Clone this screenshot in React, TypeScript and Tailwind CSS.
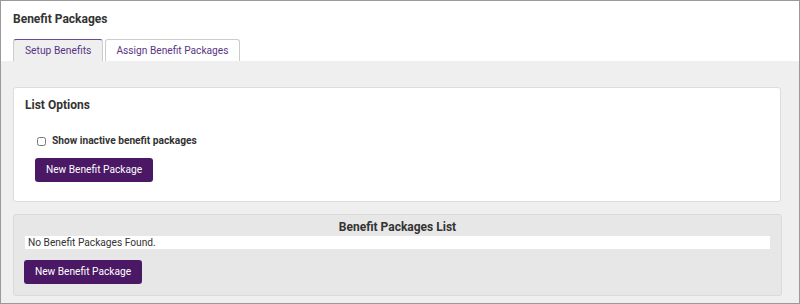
export default function App() {
	return (
		<div className="w-[800px] h-[304px] border border-[#9a9a9a] bg-white flex flex-col font-['Roboto',sans-serif] text-[#333]">
			<div className="px-3 pt-[10px]">
				<h1 className="text-[12px] font-bold leading-[16px]">Benefit Packages</h1>
			</div>

			<div className="flex gap-[2px] px-3 mt-[12px]">
				<div className="h-[22px] px-[11px] flex items-center bg-[#efefef] border border-[#ccc] border-t-[#6b4a93] border-b-0 rounded-t-[3px] text-[10.3px] text-[#5a3585]">
					Setup Benefits
				</div>
				<div className="h-[22px] px-[10px] flex items-center bg-white border border-[#ccc] border-b-0 rounded-t-[3px] text-[10.2px] text-[#5a3585]">
					Assign Benefit Packages
				</div>
			</div>

			<div className="flex-1 bg-[#efefef] pl-3 pr-[18px] pt-[26px] flex flex-col gap-[12px]">
				<div className="h-[115px] bg-white border border-[#dcdcdc] rounded-[3px] px-[11px] pt-[10px]">
					<h2 className="text-[12px] font-bold leading-[14px]">List Options</h2>
					<label className="flex items-center gap-[6px] mt-[22px] ml-[12px] text-[10.2px] font-bold leading-[14px]">
						<input type="checkbox" className="w-[9px] h-[9px] accent-[#4a1864]" />
						Show inactive benefit packages
					</label>
					<button className="mt-[10px] ml-[10px] w-[118px] h-[24px] rounded-[3px] bg-[#4a1864] text-white text-[10.2px] leading-[14px]">
						New Benefit Package
					</button>
				</div>

				<div className="h-[82px] bg-[#e7e7e7] border border-[#dadada] rounded-[3px] px-[11px] pt-[4px] mr-[-1px]">
					<div className="text-center text-[12px] font-bold leading-[16px]">Benefit Packages List</div>
					<div className="mt-[1px] bg-white h-[13px] flex items-center px-[3px] text-[10.2px] leading-[13px]">
						No Benefit Packages Found.
					</div>
					<button className="mt-[11px] -ml-[1px] w-[118px] h-[24px] rounded-[3px] bg-[#4a1864] text-white text-[10.2px] leading-[14px]">
						New Benefit Package
					</button>
				</div>
			</div>
		</div>
	)
}
